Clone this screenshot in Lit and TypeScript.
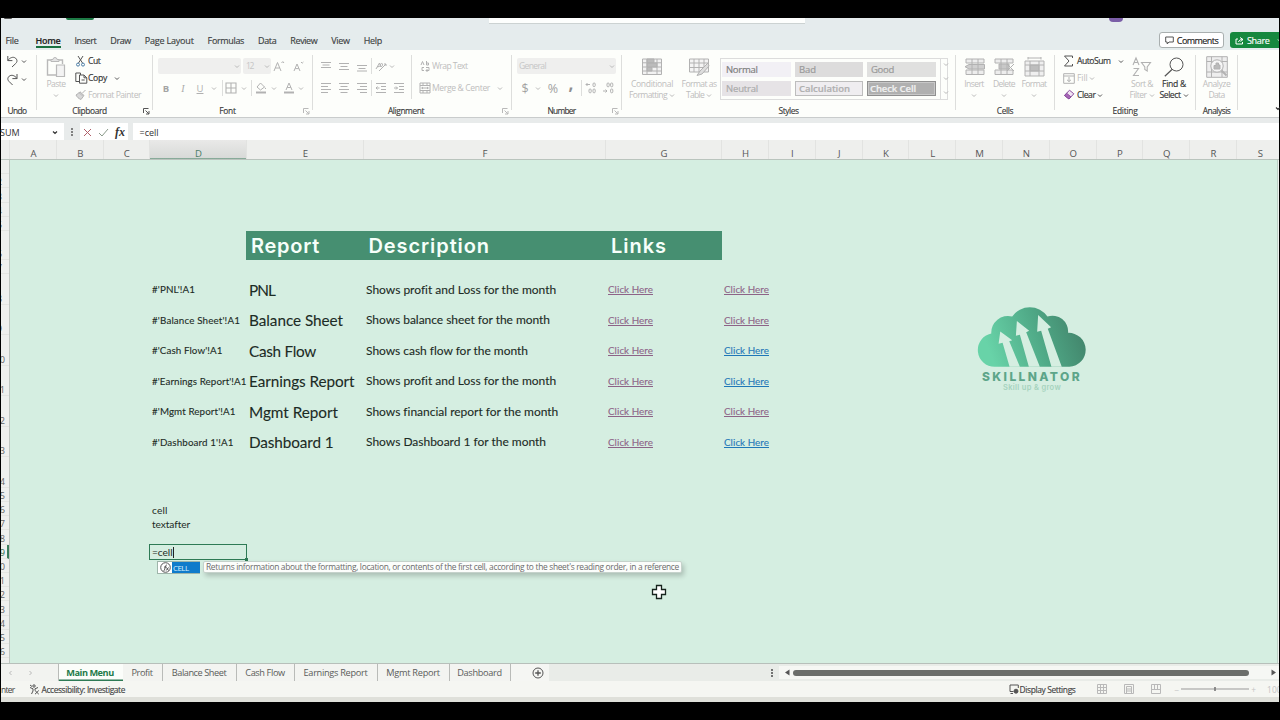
import { LitElement, html, svg, css, TemplateResult } from "lit";
import { customElement } from "lit/decorators.js";

const t = (text: string, w: number, cls = "") => html`<span class="t ${cls}" data-w=${w}>${text}</span>`;

const icon = (w: number, h: number, body: unknown, cls = "") =>
  html`<svg class="ic ${cls}" width=${w} height=${h} viewBox="0 0 ${w} ${h}">${body}</svg>`;

const chev = (cls = "dis") => icon(6, 5, svg`<path d="M1 1.5 3 3.5 5 1.5"/>`, cls);
const launcher = (cls = "dis") =>
  icon(7, 7, svg`<path d="M.5 5V.5H5.5M2.5 2.5 6 6M6 3V6H3"/>`, cls);
const vsep = html`<i class="vsep"></i>`;

const lines = (y: number, rows: number[][]) =>
  svg`${rows.map(([a, b], i) => svg`<path d="M${a} ${y + i * 3}H${b}"/>`)}`;

const pasteIcon = icon(20, 22, svg`<path d="M10 19H1.5V4H5M13 4H16.5V8" stroke-width="1.4"/><path d="M5 5.5V3.5H7A2 2 0 0 1 11 3.5H13V5.5Z" fill="#e4e4e4"/><path d="M10.5 9H18.5V20.5H10.5Z" fill="#f3f3f3" stroke-width="1.2"/>`, "dis");
const cutIcon = icon(11, 12, svg`<path d="M3 1 7.5 8M8 1 3.5 8"/><circle cx="3" cy="9.6" r="1.5" stroke="#4d7ea8"/><circle cx="8" cy="9.6" r="1.5" stroke="#4d7ea8"/>`);
const copyIcon = icon(13, 12, svg`<path d="M4 9.5H.8V1H5.5V3"/><path d="M4.5 3H9L11.8 5.8V11.2H4.5ZM9 3V5.8H11.8M6.5 8H9.7"/>`);
const painterIcon = icon(12, 12, svg`<path d="M10.5 1 7.5 4M5 2.8 9 6.5 8 7.8 3.8 4Z" fill="#c9c9c9"/><path d="M3.8 4 1 6C2 8 3.5 9.6 6 10.5L8 7.8" fill="#d8d8d8"/>`, "dis2");
const bordersIcon = icon(12, 12, svg`<path d="M1 1H11V11H1ZM6 1V11M1 6H11" stroke-width="1.1"/>`, "dis2");
const bucketIcon = icon(12, 12, svg`<path d="M5.5 1 9.5 5 5.5 8 2 5ZM9.8 5.5 10.8 7"/><path d="M1 10.5H11" stroke-width="2"/>`, "dis2");
const fontColorIcon = icon(12, 12, svg`<path d="M3 8 6 1 9 8M4.2 5.5H7.8"/><path d="M1 10.5H11" stroke-width="2"/>`, "dis2");
const growIcon = icon(12, 12, svg`<path d="M1 11 4.5 2.5 8 11M2.3 8H6.7M8.5 3 9.8 1.6 11 3"/>`, "dis2");
const shrinkIcon = icon(12, 12, svg`<path d="M1 11 4 4 7 11M2.2 8.6H5.8M8 2 9.2 3.2 10.4 2"/>`, "dis2");
const orientIcon = icon(12, 12, svg`<path d="M1 9 4.5 3 6 7M2.5 7 5 6M4 11 11 4M9 4H11V6M5 5C6 3 8 3 7.5 5S5.5 7 5.5 6"/>`, "dis2");
const al = (rows: number[][]) => icon(12, 12, lines(1.5, rows), "dis2");
const alTop = icon(12, 12, svg`<path d="M1 2.5H11M2.5 5H9.5M1 7.5H11"/>`, "dis2");
const alMid = icon(12, 12, svg`<path d="M1 3.5H11M2.5 6.5H9.5M1 9.5H11"/>`, "dis2");
const alBot = icon(12, 12, svg`<path d="M1 5.5H11M2.5 8.5H9.5M1 11H11"/>`, "dis2");
const alL = al([[1, 11], [1, 8], [1, 11], [1, 8]]);
const alC = al([[1, 11], [2.5, 9.5], [1, 11], [2.5, 9.5]]);
const alR = al([[1, 11], [4, 11], [1, 11], [4, 11]]);
const indL = icon(12, 12, svg`<path d="M1 1.5H11M6 4.5H11M6 7.5H11M1 10.5H11M4.5 6H1M2.5 4.5 1 6 2.5 7.5"/>`, "dis2");
const indR = icon(12, 12, svg`<path d="M1 1.5H11M6 4.5H11M6 7.5H11M1 10.5H11M1 6H4.5M3 4.5 4.5 6 3 7.5"/>`, "dis2");
const wrapIcon = icon(11, 12, svg`<path d="M1 5 2.5 1.5 4 5M6.5 1V5H8.5V3H6.5M4 7.5H2V10.5H4M6 7.5H9V10.5H6M7.5 9 6 10.5 7.5 12"/>`, "dis2");
const mergeIcon = icon(12, 12, svg`<path d="M1 1H11V11H1ZM1 3.5H11M1 8.5H11M4 1V3.5M8 1V3.5M4 8.5V11M8 8.5V11M2.5 6H9.5M4 5 2.8 6 4 7M8 5 9.2 6 8 7" />`, "dis2");
const decInc = icon(12, 12, svg`<path d="M5 2.5H1M2.5 1 1 2.5 2.5 4"/><rect x="8" y="1" width="2.2" height="3.6" rx="1"/><rect x="4" y="7" width="2.2" height="3.8" rx="1"/><rect x="8" y="7" width="2.2" height="3.8" rx="1"/>`, "dis2");
const decDec = icon(12, 12, svg`<path d="M1 9H5M3.5 7.5 5 9 3.5 10.5"/><rect x="5" y="1" width="2.2" height="3.8" rx="1"/><rect x="8.6" y="1" width="2.2" height="3.8" rx="1"/><rect x="8.6" y="7" width="2.2" height="3.8" rx="1"/>`, "dis2");
const condIcon = icon(20, 18, svg`<path d="M.5 1H19.5V16.5H.5Z" fill="#f2f2f2"/><path d="M5 1H12V4.5H5ZM5 5H15V9H5ZM5 9.5H10V13H5Z" fill="#bbb"/><path d="M.5 4.8H19.5M.5 9H19.5M.5 13H19.5M5 1V16.5M15 1V16.5"/>`, "dis2");
const tableIcon = icon(21, 20, svg`<path d="M.5 2H19.5V15H.5Z" fill="#f4f4f4"/><path d="M.5 6H19.5M.5 10.5H19.5M5 2V15M10 2V15M15 2V15"/><path d="M19 6 11 14 8 18.5 13 17 20 9Z" fill="#ddd"/>`, "dis2");
const insertIcon = icon(21, 18, svg`<path d="M2 1H20V5H2ZM2 12H20V16.5H2Z" fill="#ededed"/><path d="M5 6.5H20.5V11H5L1 8.7Z" fill="#cfcfcf"/><path d="M8 1V16.5M14 1V16.5"/>`, "dis2");
const deleteIcon = icon(21, 18, svg`<path d="M1 1H19V5H1ZM1 12H19V16.5H1Z" fill="#ededed"/><path d="M5 6H15V11H5Z" fill="#c8c8c8"/><path d="M7 1V16.5M13 1V16.5M13 6 20 13M20 6 13 13"/>`, "dis2");
const formatIcon = icon(21, 20, svg`<path d="M4 1H17M4 0V2.5M17 0V2.5"/><path d="M1 4H20V19H1Z" fill="#efefef"/><path d="M6 8H15V14H6Z" fill="#bdbdbd"/><path d="M1 8H20M1 14H20M6 4V19M15 4V19"/>`, "dis2");
const sigmaIcon = icon(11, 12, svg`<path d="M9.5 3V1H1.5L6 6 1.5 11H9.5V9"/>`);
const fillIcon = icon(12, 11, svg`<path d="M.7.7H11.3V10.3H.7ZM.7 3H11.3M6 4V8.5M4 6.8 6 8.6 8 6.8"/>`, "dis2");
const clearIcon = icon(12, 12, svg`<path d="M6.5 1.2 10.8 4.8 6 10 1.5 6.5Z" fill="#f2e4f5" stroke="#8b4f9e"/><path d="M3.6 4.2 8 8 6 10 1.5 6.5Z" fill="#a866b8" stroke="#8b4f9e"/>`);
const sortIcon = icon(20, 20, svg`<path d="M1 8 4 1 7 8M2.2 5.5H5.8M1.5 11.5H6.5L1.5 18.5H7M9.5 5.5H18.5L15.2 10V14L12.8 12.5V10Z" stroke-width="1.1"/>`, "dis2");
const findIcon = icon(20, 20, svg`<circle cx="12.5" cy="7.5" r="6.5"/><path d="M8 12.5 .8 19.2" stroke-width="1.2"/>`);
const analyzeIcon = icon(22, 22, svg`<path d="M.7.7H21.3V21.3H.7ZM.7 5.5H21.3M.7 16H21.3M5.5.7V21M16 .7V21" fill="#eee"/><circle cx="11" cy="10" r="6.2" fill="#f6f6f6"/><path d="M8 13V9.5H10V7H12.5V9H14V13Z" fill="#bbb"/><path d="M15.5 14.5 20.5 19.5" stroke-width="2"/>`, "dis2");
const undoIcon = icon(13, 13, svg`<path d="M1.8 1V5.6H6.4M1.8 5.4C4 2.6 7.2 1.3 9.6 3.2 12 5.4 10.8 7.6 9.4 8.8L6 12"/>`);
const redoIcon = icon(13, 13, svg`<path d="M11 1V5.6H6.4M11 5.4C8.8 2.6 5.6 1.3 3.2 3.2 .8 5.4 2 7.6 3.4 8.8L6.6 12"/>`);

const big = (ic: TemplateResult, a: TemplateResult, b: TemplateResult, cls: string) => html`
  <div class="big ${cls}"><div class="bi">${ic}</div><div class="bl">${a}</div><div class="bl">${b}</div></div>`;

const group = (cls: string, label: string, lw: number, body: unknown, launch: unknown = "") => html`
  <section class="grp ${cls}"><div class="body">${body}</div>
    <footer>${t(label, lw, "md")}<span class="ln">${launch}</span></footer></section>${vsep}`;

const rows = [
  ["#'PNL'!A1", 43, "PNL", 26, "Shows profit and Loss for the month", 190, 0],
  ["#'Balance Sheet'!A1", 88, "Balance Sheet", 94, "Shows balance sheet for the month", 184, 0],
  ["#'Cash Flow'!A1", 70.5, "Cash Flow", 67, "Shows cash flow for the month", 162, 1],
  ["#'Earnings Report'!A1", 94.5, "Earnings Report", 105.5, "Shows profit and Loss for the month", 190, 1],
  ["#'Mgmt Report'!A1", 83.5, "Mgmt Report", 89, "Shows financial report for the month", 192, 0],
  ["#'Dashboard 1'!A1", 81.5, "Dashboard 1", 84.5, "Shows Dashboard 1 for the month", 180, 1],
] as [string, number, string, number, string, number, number][];

const small = 14.23;
const rowHeights = [small, small, small, small, small, 28.85, small, 30.5, 30.5, 30.5, 30.5, 30.5, 30.5, 30.5,
  ...Array(12).fill(small)];

const columnNames = "ABCDEFGHIJKLMNOPQRS".split("");

@customElement("app-root")
export class AppRoot extends LitElement {
  static styles = css`
    :host { display: block; width: 1280px; height: 720px; background: #000; overflow: hidden;
      font-family: "Open Sans", "Noto Sans", sans-serif; font-size: 8.6px; line-height: 11px; color: #3c3f3f; }
    * { box-sizing: border-box; }
    .win { margin: 0 1px; height: 720px; padding: 18px 0; display: flex; flex-direction: column; }
    .t { display: inline-block; white-space: pre; }
    .md { -webkit-text-stroke: .15px; }
    .ic { display: block; fill: none; stroke: #555; stroke-width: 1; flex: none; overflow: visible; }
    .ic.dis { stroke: #b9b9b9; } .ic.dis2 { stroke: #b2b2b2; }
    .ic.wh { stroke: #fff; }
    .ic.dk { stroke: #333; stroke-width: 1.2; }
    .vsep { width: 1px; background: #dddedc; align-self: stretch; }
    .title { height: 12px; background: #e5ebed; display: flex; align-items: flex-start; flex: none; }
    .pill { width: 28px; height: 2px; background: #1d7a45; border-radius: 0 0 3px 3px; margin-left: 65px; }
    .pill.first { width: 8px; height: 1px; background: #555; margin-left: 3px; margin-right: -11px; }
    .search { width: 316px; height: 6px; background: #fdfefd; border-bottom: 1px solid #ccd2d2; margin-left: 395px; }
    .avatar { width: 14px; height: 3.5px; background: #7b5ea7; border-radius: 0 0 8px 8px; margin-left: 304px; }
    .menu { height: 20px; background: #e5eced; display: flex; flex: none; padding-left: 4.5px; align-items: center; font-size: 9px; }
    .menu .tab { display: flex; align-items: center; height: 20px; margin-right: 13.9px; }
    .menu .tab:first-child { margin-right: 17px; }
    .menu .home { background: linear-gradient(#1a7040, #1a7040) 0 16px / 100% 2px no-repeat; font-weight: 600; color: #222; }
    .comments { margin-left: auto; width: 65px; height: 16px; border: 1px solid #a9afaf; border-radius: 3px; background: #fff; display: flex; align-items: center; justify-content: center; gap: 3px; color: #222; }
    .share { margin-left: 6px; width: 49px; height: 16px; border-radius: 3px 0 0 3px; background: #16883e; color: #fff; display: flex; align-items: center; padding-left: 5px; gap: 3px; overflow: hidden; flex: none; }
    .share .last { margin-left: 4px; }
    .ribbon { height: 68px; background: #fdfefb; display: flex; flex: none; border-bottom: 1px solid #c9cccc; }
    .ribbon > .vsep { margin: 5px 0 7px; }
    .grp { display: flex; flex-direction: column; flex: none; }
    .body { height: 54px; display: flex; flex: none; }
    .grp footer { height: 14px; display: grid; place-items: center; position: relative; color: #3a3a3a; font-size: 8.4px; }
    .ln { position: absolute; right: 2px; top: 4px; }
    .g-undo { width: 35px; } .g-clip { width: 115px; } .g-font { width: 159px; } .g-align { width: 198px; }
    .g-num { width: 109px; } .g-styles { width: 333px; } .g-cells { width: 98px; } .g-edit { width: 140px; } .g-ana { width: 41px; }
    .g-undo footer { padding-right: 3px; }
    .g-clip footer { padding-right: 10px; } .g-font footer, .g-align footer, .g-num footer { padding-right: 10px; }
    .g-align footer { padding-right: 12px; }
    .dim { color: #bdbdbd; } .dark { color: #333; }
    .stack { display: flex; flex-direction: column; padding-top: 2.6px; }
    .stack > div { height: 17.7px; display: grid; align-items: center; }
    .undo > div { grid-template-columns: 15px 6px; padding-left: 5px; }
    .clip > div { grid-template-columns: 13px 26px 6px; }
    .edit { width: 68px; }
    .edit > div { grid-template-columns: 14px 1fr; padding-left: 8px; }
    .inl { display: flex; align-items: center; gap: 1px; }
    .inl.auto { gap: 7px; }
    .big { display: flex; flex-direction: column; align-items: center; padding-top: 5px; flex: none; }
    .bi { height: 24px; display: flex; align-items: center; }
    .bl { height: 11px; display: flex; align-items: center; gap: 2px; }
    .paste { width: 38px; } .cond { width: 60px; } .fat { width: 34px; }
    .cell { width: 30px; } .g-cells .body { padding-left: 3px; }
    .cell .bl, .big .bl { white-space: nowrap; }
    .sort { width: 38px; } .find { width: 26px; } .ana { width: 41px; }
    .two { display: flex; flex-direction: column; padding-top: 5px; }
    .two > div { height: 22px; display: grid; place-items: center; }
    .two .vsep { height: 16px; align-self: center; }
    .two .vsep.full { height: 22px; }
    .two .s { justify-self: start; }
    .f1 { grid-template-columns: 83px 28px 18px 14px; column-gap: 2px; padding-left: 5px; justify-content: start; }
    .f2 { grid-template-columns: 12px 22px 12px 16px 1px 16px 10px 5px 14px 12px 18px 6px; padding-left: 7px; justify-content: start; }
    .f2 b { font-size: 9.5px; color: #a4a4a4; } .f2 i.it { font: italic 10px "Liberation Serif", serif; color: #aaa; }
    .f2 u { font-size: 9.5px; color: #b0b0b0; }
    .box { height: 16px; background: #efefee; border-radius: 2px; width: 100%; display: flex; align-items: center; justify-content: flex-end; gap: 11px; padding-right: 1px; color: #c6c6c6; }
    .a1 { grid-template-columns: 18px 18px 17px 2px 18px 4px 10px 14px 14px 62px; padding-left: 4px; justify-content: start; }
    .a2 { grid-template-columns: 18px 18px 17px 2px 18px 18px 6px 4px 14px 62px 12px; padding-left: 4px; justify-content: start; }
    .n1 { padding: 0 5px; }
    .n1 .box { justify-content: space-between; padding-left: 2px; width: 99px; }
    .n2 { grid-template-columns: 16px 10px 20px 16px 4px 16px 18px; padding-left: 5px; justify-content: start; font-size: 12.5px; color: #a2a2a2; }
    .n2 b { font-size: 17px; line-height: 8px; margin-top: -9px; color: #8f8f8f; }
    .gallery { margin: 8px 0 0 4px; width: 228px; height: 42px; border: 1px solid #dcdcdc; display: grid; grid-template-columns: 69px 68px 69px 10px; grid-template-rows: 15px 15px; gap: 4px; padding: 3px 0 0 1px; font-size: 9.5px; }
    .gallery div { padding-left: 4px; display: flex; align-items: center; }
    .gallery .t { -webkit-text-stroke: .2px; }
    .sw1 { background: #f2f0f5; color: #808080; } .sw2 { background: #dddcdc; color: #9a9a9a; } .sw3 { background: #e0e0df; color: #9a9a9a; }
    .sw4 { background: #e6e3e6; color: #ababab; } .gallery .sw5 { background: #efedf0; border: 1px solid #bdbdbd; color: #b0b0b0; font-weight: 600; padding-left: 3px; }
    .gallery .sw6 { background: #b0b0b0; border: 1px solid #8f8f8f; box-shadow: inset 0 0 0 1px #c8c8c8; color: #f1f1f1; font-weight: 600; padding-left: 2px; }
    .gallery .spin { grid-column: 4; grid-row: 1 / 3; margin: -4px 0 -3px; padding: 0; border-left: 1px solid #dcdcdc; display: grid; grid-template-rows: 1fr 1fr 1fr; place-items: center; }
    .collapse { margin-left: auto; align-self: flex-end; padding-bottom: 6px; margin-right: -2px; }
    .fbar { height: 22px; flex: none; background: #e8ebeb; padding-top: 5px; display: flex; font-size: 9px; color: #333; }
    .fbar > div { height: 17px; background: #fff; display: flex; align-items: center; padding-top: 1px; }
    .fbar .name { width: 63px; justify-content: space-between; padding-right: 6px; }
    .fbar .name .t { margin-left: -1px; }
    .fbar .dots { width: 16px; background: none; justify-content: center; }
    .fbar .fx { width: 48px; display: grid; grid-template-columns: 15px 17px 16px; place-items: center; }
    .fbar .fx .no { stroke: #b0606a; } .fbar .fx .yes { stroke: #8a9a8a; }
    .fx em { font: italic 600 12px "Liberation Serif", serif; color: #333; }
    .fbar .input { margin-left: 5px; flex: 1; padding-left: 6.5px; }
    .cols { height: 20px; flex: none; background: #eeefed; border-bottom: 1px solid #b9c4bd; display: grid;
      grid-template-columns: 9px 47px 46.5px 46.5px 97px 117px 242px 116px 47px repeat(11, 46.8px); overflow: hidden; font-size: 9.6px; color: #555; }
    .cols div { display: grid; place-items: center; border-right: 1px solid #e2e3e1; padding: 7px 0 0 1px; height: 19px; }
    .cols div.sel { background: linear-gradient(#e9e9e8, #d6d8d6); box-shadow: inset 0 -1.5px #3a7d5c; height: 20px; color: #4e7d66; padding-bottom: 1px; }
    .main { flex: 1; display: flex; min-height: 0; position: relative; background: #eff0ee; }
    .nums { width: 9px; border-right: 1px solid #bfc6c1; overflow: hidden; font-size: 9.2px; color: #666; flex: none; }
    .num { display: flex; align-items: flex-end; justify-content: flex-end; padding-right: 4px; border-bottom: 1px solid #e4e5e2; line-height: 11px; }
    .num.one { padding-right: 7px; }
    .num.act { border-right: 2px solid #3a7d5c; color: #2f6e50; padding-right: 2px; }
    .sheet { width: 1268px; background: #d5eee1; border-right: 1px solid #bcd0c5; flex: none; overflow: hidden; padding: 71px 0 0 140px; font-family: Lato, sans-serif; color: #1c2b25; }
    .head { margin-left: 96px; width: 476px; height: 29px; background: #468f71; color: #f6fffa; display: grid; grid-template-columns: 117.5px 242.5px 1fr; align-items: center; padding: 1px 0 0 5px; font: 600 20px/28px Inter, sans-serif; }
    .data { padding-top: 14.6px; }
    .dr { height: 30.5px; display: grid; grid-template-columns: 97px 117px 242px 116px 60px; align-items: center; padding-left: 2px; }
    .dr .c1 { font-size: 9.8px; } .dr .c2 { font-size: 15.3px; line-height: 18px; } .dr .c3 { font-size: 12px; line-height: 14px; }
    .dr .c1, .dr .c2, .dr .c3 { -webkit-text-stroke: .1px; }
    .dr a { font-size: 9.8px; color: #8d6387; -webkit-text-stroke: .1px; }
    .dr a .t { text-decoration: underline; text-underline-offset: 1px; }
    .dr a.new { color: #1f77b8; }
    .more { padding: 45.5px 0 0 2px; font-size: 10.2px; }
    .more div { height: 14.23px; display: flex; align-items: center; }
    .edit-cell { position: absolute; left: 148px; top: 384px; width: 98px; height: 16px; border: 1.5px solid #2e7a55; display: flex; align-items: center; padding-left: 2px; font: 10.2px/12px Lato, sans-serif; color: #1c2b25; }
    .caret { width: 1px; height: 11px; background: #222; }
    .handle { position: absolute; right: -2px; bottom: -2px; width: 3px; height: 3px; background: #2e7a55; }
    .auto-list { position: absolute; left: 156px; top: 401px; width: 43px; height: 13px; background: #fff; border: 1px solid #9fb5aa; display: flex; }
    .auto-list .fi { width: 14px; display: grid; place-items: center; }
    .auto-list .hit { flex: 1; margin: 0 -1px 0 0; background: #0f7bcb; color: #d8f0ff; display: flex; align-items: center; padding-left: 1px; font-size: 8px; }
    .tip { position: absolute; left: 202px; top: 401px; width: 479px; height: 12px; background: #fbfdfb; border: 1px solid #c5d2cb; border-radius: 2px; box-shadow: 2px 3px 5px #0003; padding: 0 0 2px 2px; display: flex; align-items: center; font-size: 8.4px; color: #6b6b6b; }
    .cursor { position: absolute; left: 649.5px; top: 423.5px; }
    .logo { position: absolute; left: 977px; top: 148px; width: 108px; display: flex; flex-direction: column; align-items: center; }
    .logo svg { overflow: visible; }
    .brand { font: 800 12px/13px Inter, sans-serif; color: #5da589; margin-top: 3px; }
    .slogan { font: 600 7.5px/9px Inter, sans-serif; color: #a6d3be; }
    .tabs { height: 18px; flex: none; display: flex; background: #e9ece8; border-top: 1px solid #b7bfba; font-size: 9.2px; color: #5a5c5a; }
    .nav { width: 57px; background: #f2f3f0; display: flex; padding-left: 7px; gap: 15px; align-items: center; }
    .st { display: flex; align-items: center; justify-content: center; border-right: 1px solid #b9bbb8; background: #f3f4f1; height: 17px; padding-right: 1px; }
    .st.on { background: #fbfdfa; color: #1f7a49; font-weight: 700; border: 0; border-left: 1px solid #b9bbb8; box-shadow: inset 0 -1.5px #2e7a55; padding-right: 2px; }
    .s0 { width: 65px; } .s1 { width: 40px; } .s2 { width: 74px; } .s3 { width: 58px; } .s4 { width: 83px; } .s5 { width: 72px; } .s6 { width: 61px; }
    .add { width: 38px; background: #f5f6f3; display: flex; align-items: center; justify-content: flex-end; padding-right: 5px; }
    .hs { margin-left: auto; display: flex; align-items: center; width: 508px; }
    .hs .track { flex: 1; margin-left: 6px; height: 13px; background: #f6f7f4; display: flex; align-items: center; padding: 0 2px 0 5px; }
    .thumb { height: 6px; width: 456px; border-radius: 3px; background: #6c6e6b; margin: 0 auto 0 3px; }
    .status { height: 16px; flex: none; background: #f5f6f2; display: flex; align-items: center; font-size: 8.4px; color: #444; overflow: hidden; }
    .status .acc { margin-left: 14px; } .status .acct { margin-left: 2px; }
    .status .disp { margin-left: auto; display: flex; gap: 2px; align-items: center; width: 270.5px; flex: none; }
    .disp .t { margin-left: -1px; }
    .views { display: flex; gap: 17px; margin-left: 19px; }
    .zoom { display: flex; align-items: center; gap: 2px; margin-left: 12px; color: #c4c4c4; }
    .pct { margin-left: 9px; }
    .strip { height: 5px; flex: none; background: #dfe0da; }
  `;

  /* Spreads each label over its nominal width. */
  protected firstUpdated() {
    this.renderRoot.querySelectorAll<HTMLElement>(".t").forEach((el) => {
      const want = Number(el.dataset.w);
      const range = document.createRange();
      range.selectNodeContents(el);
      const have = range.getBoundingClientRect().width;
      const n = (el.textContent ?? "").length;
      if (want && n) el.style.letterSpacing = `${((want - have) / n).toFixed(3)}px`;
    });
  }

  render() {
    const menu: [string, number][] = [["File", 13], ["Home", 25], ["Insert", 22], ["Draw", 20.5], ["Page Layout", 49], ["Formulas", 36.5], ["Data", 18.5], ["Review", 27], ["View", 18.5], ["Help", 18.5]];
    const sheets: [string, number][] = [["Main Menu", 47.5], ["Profit", 21], ["Balance Sheet", 54.5], ["Cash Flow", 39.5], ["Earnings Report", 64], ["Mgmt Report", 53.5], ["Dashboard", 44.5]];
    const chevs = chev();
    return html`<div class="win">
      <div class="title"><i class="pill first"></i><i class="pill"></i><i class="search"></i><i class="avatar"></i></div>
      <nav class="menu">
        ${menu.map(([m, w]) => html`<div class="tab ${m === "Home" ? "home" : ""}">${t(m, w, "md")}</div>`)}
        <div class="comments">${icon(9, 9, svg`<path d="M.7 1H8.3V6H4L2.2 8V6H.7Z"/>`)}${t("Comments", 41.5, "md")}</div>
        <div class="share">${icon(9, 9, svg`<path d="M3 3H1V8H7.5V6M5 1.5 8 3.5 5.5 5.5M8 3.5C5.5 3.3 4 4.2 3.5 6"/>`, "wh")}${t("Share", 22.5, "md")}<span class="last">${chev("wh")}</span></div>
      </nav>
      <div class="ribbon">
        ${group("g-undo", "Undo", 19, html`<div class="stack undo"><div>${undoIcon}${chev("")}</div><div>${redoIcon}${chev("")}</div></div>`)}
        ${group("g-clip", "Clipboard", 34.5, html`
          ${big(pasteIcon, t("Paste", 19, "dim"), chevs, "paste")}
          <div class="stack clip"><div>${cutIcon}${t("Cut", 12.5, "dark md")}</div>
            <div>${copyIcon}${t("Copy", 19, "dark md")}${chev("")}</div>
            <div>${painterIcon}${t("Format Painter", 53, "dim")}</div></div>`, launcher(""))}
        ${group("g-font", "Font", 16.5, html`<div class="two">
          <div class="f1"><div class="box">${chevs}</div><div class="box">${t("12", 7)}${chevs}</div><span class="s">${growIcon}</span><span class="s">${shrinkIcon}</span></div>
          <div class="f2"><b>B</b><i class="it">I</i><u>U</u>${chevs}${vsep}${bordersIcon}${chevs}${vsep}${bucketIcon}${chevs}${fontColorIcon}${chevs}</div></div>`, launcher())}
        ${group("g-align", "Alignment", 36, html`<div class="two">
          <div class="a1">${alTop}${alMid}${alBot}${vsep}${orientIcon}${chevs}<i></i><i class="vsep full"></i>${wrapIcon}${t("Wrap Text", 35.5, "dim s")}</div>
          <div class="a2">${alL}${alC}${alR}${vsep}${indL}${indR}<i class="vsep full"></i><i></i>${mergeIcon}${t("Merge & Center", 58, "dim s")}${chevs}</div></div>`, launcher())}
        ${group("g-num", "Number", 28, html`<div class="two">
          <div class="n1"><div class="box">${t("General", 27)}${chevs}</div></div>
          <div class="n2"><span>$</span>${chevs}<span>%</span><b>,</b>${vsep}${decInc}${decDec}</div></div>`, launcher())}
        ${group("g-styles", "Styles", 20, html`
          ${big(condIcon, t("Conditional", 42, "dim"), html`${t("Formatting", 38, "dim")}${chevs}`, "cond")}
          ${big(tableIcon, t("Format as", 35, "dim"), html`${t("Table", 18, "dim")}${chevs}`, "fat")}
          <div class="gallery"><div class="sw1">${t("Normal", 31.5)}</div><div class="sw2">${t("Bad", 17)}</div><div class="sw3">${t("Good", 23)}</div>
            <div class="sw4">${t("Neutral", 32)}</div><div class="sw5">${t("Calculation", 51)}</div><div class="sw6">${t("Check Cell", 46)}</div>
            <div class="spin">${chevs}${chevs}${chevs}</div></div>`)}
        ${group("g-cells", "Cells", 16.5, html`
          ${big(insertIcon, t("Insert", 19.5, "dim"), chevs, "cell")}${big(deleteIcon, t("Delete", 22, "dim"), chevs, "cell")}${big(formatIcon, t("Format", 25, "dim"), chevs, "cell")}`)}
        ${group("g-edit", "Editing", 25, html`<div class="stack edit">
            <div>${sigmaIcon}<span class="inl auto">${t("AutoSum", 33.5, "dark md")}${chev("")}</span></div>
            <div>${fillIcon}<span class="inl">${t("Fill", 10.5, "dim")}${chevs}</span></div>
            <div>${clearIcon}<span class="inl">${t("Clear", 18.5, "dark md")}${chev("")}</span></div></div>
          ${big(sortIcon, t("Sort &", 22, "dim"), html`${t("Filter", 17, "dim")}${chevs}`, "sort")}
          ${big(findIcon, t("Find &", 24, "dark md"), html`${t("Select", 21, "dark md")}${chev("")}`, "find")}`)}
        ${group("g-ana", "Analysis", 27.5, big(analyzeIcon, t("Analyze", 27.5, "dim"), t("Data", 16, "dim"), "ana"))}
        <span class="collapse">${chev("dk")}</span>
      </div>
      <div class="fbar">
        <div class="name">${t("SUM", 19.5)}${chev("dk")}</div>
        <div class="dots">${icon(2, 8, svg`<path d="M1 0V2M1 3V5M1 6V8" stroke-width="1.4"/>`)}</div>
        <div class="fx">${icon(9, 9, svg`<path d="M1 1 8 8M8 1 1 8"/>`, "no")}${icon(11, 9, svg`<path d="M1 5 4 8 10 1"/>`, "yes")}<em>fx</em></div>
        <div class="input">${t("=cell", 19)}</div>
      </div>
      <div class="cols"><div></div>${columnNames.map((c) => html`<div class=${c === "D" ? "sel" : ""}>${c}</div>`)}</div>
      <div class="main">
        <div class="nums">${rowHeights.map((h, i) => html`<div class="num ${i < 9 ? "one" : ""} ${i === 18 ? "act" : ""}" style="height:${h}px">${i + 1}</div>`)}</div>
        <div class="sheet">
          <div class="head">${t("Report", 69)}${t("Description", 121.5)}${t("Links", 56)}</div>
          <div class="data">${rows.map(([a, aw, b, bw, c, cw, fresh]) => html`<div class="dr">
            ${t(a, aw, "c1")}${t(b, bw, "c2")}${t(c, cw, "c3")}<a>${t("Click Here", 45)}</a><a class=${fresh ? "new" : ""}>${t("Click Here", 45)}</a></div>`)}</div>
          <div class="more"><div>${t("cell", 15.5)}</div><div>${t("textafter", 38)}</div></div>
        </div>
        <div class="logo">
          <svg width="108" height="59" viewBox="55 55 325 176">
            <defs><linearGradient id="g" x1="0" x2="1" y1=".2" y2="0"><stop offset="0" stop-color="#68d3a8"/><stop offset=".5" stop-color="#4fa886"/><stop offset="1" stop-color="#3f7c65"/></linearGradient></defs>
            <path fill="url(#g)" d="M105 231A50.5 50.5 0 0 1 95 131A50 50 0 0 1 158 80A64 64 0 0 1 264 80A47 47 0 0 1 326 129A51 51 0 0 1 330 231Z"/>
            <path fill="#d5eee1" d="M122 125 158 151 149 154 181 231H150L129 159 117 162ZM172 93 209 123 200 127 241 231H208L181 135 169 138ZM236 75 275 112 265 117 307 231H276L245 123 233 126Z"/>
          </svg>
          <div class="brand">${t("SKILLNATOR", 100)}</div><div class="slogan">${t("Skill up & grow", 58)}</div>
        </div>
        <div class="edit-cell">${t("=cell", 20.5)}<i class="caret"></i><i class="handle"></i></div>
        <div class="auto-list"><span class="fi">${icon(11, 11, svg`<circle cx="5.5" cy="5.5" r="4.8"/><path d="M3.5 9C5 9 5 3 6.8 2.8M4 5H6.5M6.5 5.5 8.5 8.5M8.5 5.5 6.2 8.5"/>`)}</span><span class="hit">${t("CELL", 15.5)}</span></div>
        <div class="tip">${t("Returns information about the formatting, location, or contents of the first cell, according to the sheet's reading order, in a reference", 473)}</div>
        <svg class="cursor" width="16" height="16" viewBox="0 0 16 16"><path d="M5.5 1.5H10.5V5.5H14.5V10.5H10.5V14.5H5.5V10.5H1.5V5.5H5.5Z" fill="#fff" stroke="#16241d" stroke-width="1.3"/></svg>
      </div>
      <div class="tabs">
        <div class="nav">${icon(5, 6, svg`<path d="M3.5 1 1.5 3 3.5 5"/>`, "dis")}${icon(5, 6, svg`<path d="M1.5 1 3.5 3 1.5 5"/>`, "dis")}</div>
        ${sheets.map(([s, w], i) => html`<div class="st s${i} ${i ? "" : "on"}">${t(s, w)}</div>`)}
        <div class="add">${icon(12, 12, svg`<circle cx="6" cy="6" r="5"/><path d="M6 3.2V8.8M3.2 6H8.8" stroke-width="1.3"/>`)}</div>
        <div class="hs">${icon(2, 8, svg`<path d="M1 0V2M1 3V5M1 6V8" stroke-width="1.6"/>`)}
          <div class="track">${icon(6, 7, svg`<path d="M5.5 .5V6.5L1 3.5Z" fill="#555" stroke="none"/>`)}<div class="thumb"></div>${icon(6, 7, svg`<path d="M.5 .5V6.5L5 3.5Z" fill="#555" stroke="none"/>`)}</div></div>
      </div>
      <div class="status">${t("nter", 13.5)}
        <span class="acc">${icon(11, 11, svg`<circle cx="5" cy="2" r="1.2"/><path d="M1 3.5 4 4.8V7L2.5 10M9 3.5 6 4.8V6.5M6 6.5 9.8 10.2M9.8 6.5 6 10.2M1 1 3 2.5"/>`)}</span><span class="acct">${t("Accessibility: Investigate", 83.5, "md")}</span>
        <div class="disp">${icon(10, 10, svg`<path d="M4.5 7.5H1V1H9.3V4M1.5 9.5H4"/><circle cx="7" cy="7.2" r="2" fill="#555"/>`)}${t("Display Settings", 56, "md")}
          <div class="views">${icon(10, 10, svg`<path d="M.5.5H9.5V9.5H.5ZM.5 3.5H9.5M.5 6.5H9.5M3.5.5V9.5M6.5.5V9.5"/>`, "dis")}${icon(10, 10, svg`<path d="M.5.5H9.5V9.5H.5ZM2.5 2.5H7.5V9.5H2.5ZM3 5H7M3 7H7"/>`, "dis")}${icon(10, 10, svg`<path d="M.5.5H9.5V9.5H.5ZM3.5.5V5.5M6.5.5V5.5M.5 5.5H9.5"/>`, "dis")}</div>
          <div class="zoom"><span>−</span>${icon(68, 6, svg`<path d="M0 3H68" stroke="#999"/><path d="M34 1V5" stroke="#777" stroke-width="1.6"/>`)}<span>+</span><span class="pct">100%</span></div>
        </div>
      </div>
      <div class="strip"></div>
    </div>`;
  }
}
